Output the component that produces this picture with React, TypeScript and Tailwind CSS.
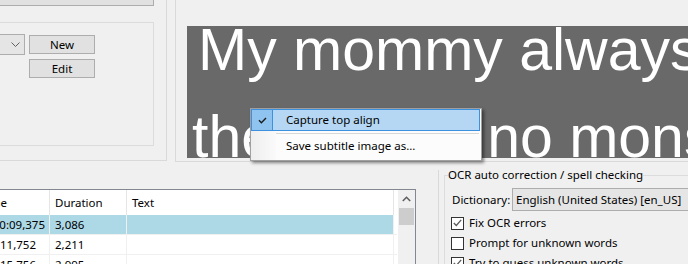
import React from "react";

const rows = [
  { end: "00:00:09,375", endPad: "pr-[4px]", dur: "3,086", text: "", selected: true },
  { end: "00:00:11,752", endPad: "pr-[13px]", dur: "2,211", text: "", selected: false },
  { end: "00:00:15,756", endPad: "pr-[13px]", dur: "2,995", text: "", selected: false },
];

function Chevron({ className }: { className?: string }) {
  return (
    <svg width="9" height="6" viewBox="0 0 9 6" className={className}>
      <path d="M0.5 0.5 L4.5 4.5 L8.5 0.5" fill="none" stroke="#606060" strokeWidth="1" />
    </svg>
  );
}

function WinButton({ label }: { label: string }) {
  return (
    <div className="w-[66px] h-[19px] bg-[#e1e1e1] border border-[#adadad] flex items-center justify-center text-black">
      {label}
    </div>
  );
}

function CheckBox({ checked }: { checked?: boolean }) {
  return (
    <div className="w-[13px] h-[13px] border border-[#333333] bg-white flex items-center justify-center shrink-0">
      {checked && (
        <svg width="9" height="8" viewBox="0 0 9 8">
          <path d="M0.8 4 L3.3 6.5 L8.2 0.8" fill="none" stroke="#5a5a5a" strokeWidth="1.3" />
        </svg>
      )}
    </div>
  );
}

function LeftPanel() {
  return (
    <div className="w-[167px] h-[161px] border-r border-b border-[#d9d9d9] shrink-0">
      <div className="w-[154px] h-[6px] bg-[#e1e1e1] border-r border-b border-[#adadad]" />
      <div className="mt-[16px] w-[154px] h-[124px] border-t border-r border-b border-[#dcdcdc]">
        <div className="mt-[11px] flex items-start">
          <div className="w-[25px] h-[21px] bg-[#e5e5e5] border-t border-r border-b border-[#adadad] flex items-center justify-end pr-[4px]">
            <Chevron />
          </div>
          <div className="ml-[4px] mt-[1px] flex flex-col gap-[5px]">
            <WinButton label="New" />
            <WinButton label="Edit" />
          </div>
        </div>
      </div>
    </div>
  );
}

function ImagePanel() {
  return (
    <div className="flex-1 h-[162px] border-l border-b border-[#d9d9d9] overflow-hidden">
      <div className="mt-[26px] ml-[11px] w-[520px] h-[132px] bg-[#696969] overflow-hidden text-white font-['Liberation_Sans',Arial,sans-serif] text-[59px] leading-[87px] whitespace-nowrap">
        <div className="-mt-[19px] pl-[11px]">My mommy always said</div>
        <div className="pl-[5px]">there were no monsters</div>
      </div>
    </div>
  );
}

function SubtitleGrid() {
  return (
    <div className="mt-[27px] w-[416px] h-[75px] border-t border-r border-[#828790] bg-white flex shrink-0">
      <div className="w-[398px]">
        <div className="flex h-[25px]">
          <div className="w-[50px] border-r border-[#e5e5e5] flex items-center justify-end overflow-hidden pr-[42px] whitespace-nowrap">
            End time
          </div>
          <div className="w-[77px] border-r border-[#e5e5e5] flex items-center pl-[5px]">Duration</div>
          <div className="w-[267px] border-r border-[#e5e5e5] flex items-center pl-[5px]">Text</div>
        </div>
        {rows.map((r) => (
          <div key={r.end} className="flex h-[20px] w-[397px] border-b border-[#f0f0f0]">
            <div
              className={`w-[50px] border-r border-[#f0f0f0] flex items-center justify-end overflow-hidden whitespace-nowrap ${r.endPad} ${
                r.selected ? "bg-[#add8e6]" : ""
              }`}
            >
              {r.end}
            </div>
            <div
              className={`w-[77px] border-r border-[#f0f0f0] flex items-center pl-[5px] ${
                r.selected ? "bg-[#add8e6]" : ""
              }`}
            >
              {r.dur}
            </div>
            <div
              className={`w-[267px] border-r border-[#f0f0f0] flex items-center pl-[5px] ${
                r.selected ? "bg-[#add8e6]" : ""
              }`}
            >
              {r.text}
            </div>
          </div>
        ))}
      </div>
      <div className="w-[17px] bg-[#f0f0f0] flex flex-col items-center">
        <div className="h-[17px] w-full flex items-center justify-center">
          <svg width="9" height="6" viewBox="0 0 9 6">
            <path d="M0.8 5 L4.5 1.3 L8.2 5" fill="none" stroke="#606060" strokeWidth="1.6" />
          </svg>
        </div>
        <div className="mt-[1px] w-[15px] h-[17px] bg-[#cdcdcd]" />
      </div>
    </div>
  );
}

function OcrOptions() {
  return (
    <div className="ml-[22px] mt-[8px] flex-1 h-[120px] border-l border-[#d9d9d9]">
      <div className="ml-[5px] mt-[5px] relative h-[100px] border-l border-t border-[#dcdcdc]">
        <span className="absolute left-[3px] -top-[9px] bg-[#f0f0f0] leading-[16px] whitespace-nowrap">
          OCR auto correction / spell checking
        </span>
        <div className="mt-[12px] pl-[7px] flex items-center">
          <span className="w-[60px] shrink-0">Dictionary:</span>
          <div className="w-[260px] shrink-0 h-[23px] bg-[#e5e5e5] border border-[#adadad] flex items-center pl-[3px] whitespace-nowrap">
            English (United States) [en_US]
          </div>
        </div>
        <div className="mt-[2px] pl-[6px] flex flex-col">
          <label className="h-[20px] flex items-center gap-[5px]">
            <CheckBox checked />
            <span>Fix OCR errors</span>
          </label>
          <label className="h-[20px] flex items-center gap-[5px]">
            <CheckBox />
            <span>Prompt for unknown words</span>
          </label>
          <label className="h-[20px] flex items-center gap-[5px]">
            <CheckBox checked />
            <span>Try to guess unknown words</span>
          </label>
        </div>
      </div>
    </div>
  );
}

function ContextMenu() {
  return (
    <div className="absolute left-[250px] top-[108px] w-[232px] h-[53px] border border-[#a0a0a0] bg-[#fcfcfc] shadow-[2px_2px_3px_rgba(0,0,0,0.45)]">
      <div className="absolute left-0 top-0 bottom-0 w-[25px] bg-gradient-to-r from-[#eeeeee] to-[#fafafa]" />
      <div className="relative mr-[1px] h-[22px] flex items-center border border-[#3d8fe0] bg-[#b5d7f3]">
        <div className="w-[21px] h-full bg-[#90c4f0] border-r border-[#3d8fe0] flex items-center justify-center">
          <svg width="9" height="7" viewBox="0 0 9 7">
            <path d="M1 3.3 L3.4 5.7 L8 1" fill="none" stroke="#1a1a1a" strokeWidth="1.4" />
          </svg>
        </div>
        <span className="ml-[13px] whitespace-nowrap">Capture top align</span>
      </div>
      <div className="relative mt-[2px] ml-[25px] mr-[2px] h-px bg-[#d7d7d7]" />
      <div className="relative mt-[1px] h-[22px] flex items-center pl-[35px] whitespace-nowrap">
        Save subtitle image as...
      </div>
    </div>
  );
}

export default function App() {
  return (
    <div className="relative w-[688px] h-[264px] overflow-hidden bg-[#f0f0f0] text-black font-['Noto_Sans',sans-serif] text-[11.5px] flex flex-col">
      <div className="flex h-[162px] items-start shrink-0">
        <LeftPanel />
        <div className="w-[8px] shrink-0" />
        <ImagePanel />
      </div>
      <div className="flex items-start">
        <SubtitleGrid />
        <OcrOptions />
      </div>
      <ContextMenu />
    </div>
  );
}
